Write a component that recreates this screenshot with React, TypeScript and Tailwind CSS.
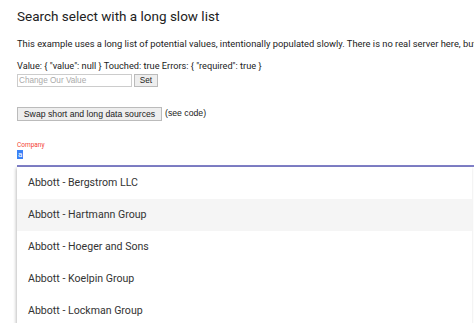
export default function App() {
  const options = [
    "Abbott - Bergstrom LLC",
    "Abbott - Hartmann Group",
    "Abbott - Hoeger and Sons",
    "Abbott - Koelpin Group",
    "Abbott - Lockman Group",
  ];

  return (
    <div className="relative h-[323px] w-[474px] overflow-hidden bg-white text-[#222] font-['Roboto',sans-serif]">
      <div className="pl-[17px] pt-[8px]">
        <h1 className="text-[13.5px] leading-[16px] text-[#222] whitespace-nowrap">Search select with a long slow list</h1>
        <p className="mt-[14px] text-[9.35px] leading-[12px] whitespace-nowrap">
          This example uses a long list of potential values, intentionally populated slowly. There is no real server here, but imagine one.
        </p>
        <div className="mt-[10px] text-[9.2px] leading-[12px] whitespace-nowrap">
          Value: {"{ \"value\": null }"} Touched: true Errors: {"{ \"required\": true }"}
        </div>
        <div className="mt-[2px] flex items-center gap-[2px]">
          <input
            placeholder="Change Our Value"
            className="h-[13px] w-[115px] border border-[#ccc] px-[1px] text-[8.2px] font-['Liberation_Sans',sans-serif] placeholder:text-[#aaa] outline-none"
          />
          <button className="h-[13px] w-[24px] border border-[#bbb] bg-[#eee] text-[8.2px] leading-[11px] font-['Liberation_Sans',sans-serif] text-[#222]">
            Set
          </button>
        </div>
        <div className="mt-[20px] flex items-center gap-[3px] text-[8.7px] whitespace-nowrap font-['Liberation_Sans',sans-serif]">
          <button className="h-[14px] w-[145px] border border-[#bbb] bg-[#eee] leading-[12px] text-[#222]">
            Swap short and long data sources
          </button>
          <span>(see code)</span>
        </div>
        <div className="mt-[20px] w-[457px]">
          <div className="text-[6.5px] leading-[8px] text-[#f44336]">Company</div>
          <div className="mt-[1px] h-[15px] text-[8px] leading-[10px]">
            <span className="bg-[#3b82f6] px-[1px] text-white">a</span>
          </div>
          <div className="h-[1.5px] bg-[#8080c8]" />
          <div className="w-[455px] bg-white shadow-[-1px_1px_3px_rgba(0,0,0,0.25)]">
            {options.map((o, i) => (
              <div
                key={o}
                className={`flex h-[32px] items-center pl-[11px] text-[10.6px] text-[#333] ${i === 1 ? "bg-[#f5f5f5]" : ""}`}
              >
                {o}
              </div>
            ))}
          </div>
        </div>
      </div>
    </div>
  );
}
